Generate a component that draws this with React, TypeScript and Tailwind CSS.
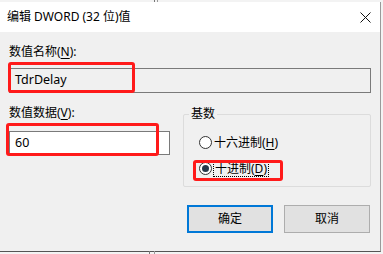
import React from "react";

const font = { fontFamily: '"Noto Sans", "Noto Sans CJK SC", sans-serif' };

function Radio({ checked }: { checked?: boolean }) {
  return (
    <span className="w-[13px] h-[13px] rounded-full border border-[#333333] bg-white flex items-center justify-center shrink-0">
      {checked && <span className="w-[7px] h-[7px] rounded-full bg-[#26384a]" />}
    </span>
  );
}

export default function App() {
  return (
    <div className="relative w-[383px] h-[254px] bg-[#f3f3f3] overflow-hidden text-[12px] text-black" style={font}>
      {/* background window edges */}
      <div className="absolute left-[154px] top-0 w-px h-[2px] bg-[#777]" />
      <div className="absolute left-[157px] top-0 w-px h-[2px] bg-[#999]" />
      <div className="absolute left-[149px] bottom-0 w-px h-[3px] bg-[#777]" />
      <div className="absolute left-[154px] bottom-0 w-px h-[3px] bg-[#999]" />

      <div className="pt-[2px]">
        <div className="w-[381px] h-[250px] flex flex-col border-r border-b border-r-[#9a9a9a] border-b-[#555555] bg-[#f0f0f0]">
          {/* title bar */}
          <div className="h-[30px] bg-white flex items-center justify-between pl-[7px] pr-[9px] shrink-0">
            <span className="text-[12px] leading-none">编辑 DWORD (32 位)值</span>
            <svg width="11" height="11" viewBox="0 0 11 11" className="mr-[0px]">
              <path d="M0.5 0.5 L10.5 10.5 M10.5 0.5 L0.5 10.5" stroke="#111" strokeWidth="1" />
            </svg>
          </div>

          {/* body */}
          <div className="flex-1 flex flex-col px-[9px]">
            <div className="mt-[12px] leading-[16px]">
              数值名称(<span className="underline underline-offset-2">N</span>):
            </div>
            <div className="mt-[8px] h-[25px] w-[362px] border border-[#7a7a7a] bg-[#f0f0f0] flex items-center pl-[5px] text-[12.5px]">
              TdrDelay
            </div>

            <div className="flex mt-[12px]">
              <div className="flex flex-col w-[161px]">
                <div className="leading-[16px]">
                  数值数据(<span className="underline underline-offset-2">V</span>):
                </div>
                <div className="mt-[10px] h-[24px] w-[161px] border border-[#7a7a7a] bg-white flex items-center pl-[5px] text-[12.5px]">
                  60
                </div>
              </div>

              <div className="ml-[13px] mt-[9px] relative w-[188px] h-[73px] border border-[#dcdcdc] rounded-[2px]">
                <span className="absolute left-[5px] top-[-9px] px-[2px] bg-[#f0f0f0] leading-[16px]">基数</span>
                <div className="flex flex-col pl-[15px] pt-[21px] gap-[13px]">
                  <div className="flex items-center gap-[2px] h-[13px]">
                    <Radio />
                    <span className="leading-[16px]">
                      十六进制(<span className="underline underline-offset-2">H</span>)
                    </span>
                  </div>
                  <div className="flex items-center gap-[1px] h-[13px]">
                    <Radio checked />
                    <span className="leading-[15px] border border-dotted border-black px-[1px]">
                      十进制(<span className="underline underline-offset-2">D</span>)
                    </span>
                  </div>
                </div>
              </div>
            </div>

            <div className="flex justify-end gap-[11px] mt-[18px] pr-[1px]">
              <button className="w-[86px] h-[28px] border-2 border-[#0078d7] bg-[#e1e1e1] flex items-center justify-center">
                确定
              </button>
              <button className="w-[86px] h-[28px] border border-[#adadad] bg-[#e1e1e1] flex items-center justify-center">
                取消
              </button>
            </div>
          </div>
        </div>
      </div>

      {/* red annotation boxes */}
      <div className="absolute left-[8px] top-[62px] w-[127px] h-[31px] border-[3px] border-[#ff1a1a] rounded-[3px]" />
      <div className="absolute left-[6px] top-[123px] w-[153px] h-[33px] border-[3px] border-[#ff1a1a] rounded-[3px]" />
      <div className="absolute left-[193px] top-[160px] w-[90px] h-[21px] border-[3px] border-[#ff1a1a] rounded-[3px]" />
    </div>
  );
}
